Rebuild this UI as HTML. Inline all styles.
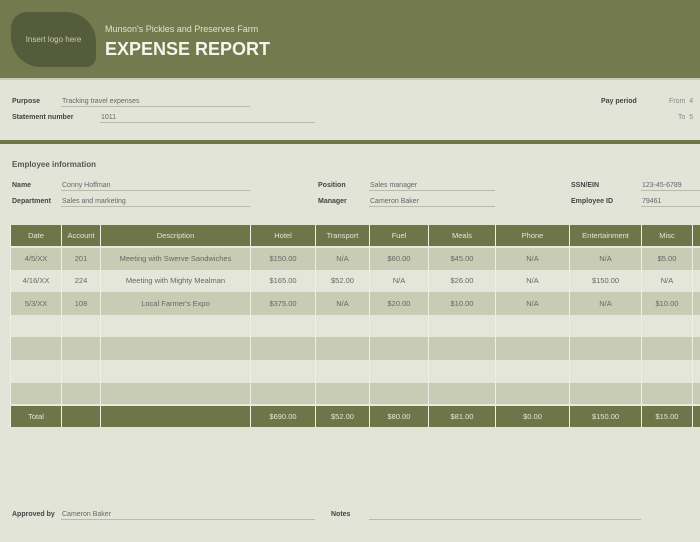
<!DOCTYPE html>
<html><head><meta charset="utf-8"><style>
*{margin:0;padding:0;box-sizing:border-box}
body{width:700px;height:542px;overflow:hidden;background:#e3e4d8;font-family:"Liberation Sans",sans-serif;position:relative;color:#555}
.a{position:absolute;white-space:nowrap}
.hdr{left:0;top:0;width:700px;height:80px;background:#727a4e;border-bottom:2px solid #c9cbb6}
.logo{left:11px;top:12px;width:85px;height:55px;background:#555c3b;border-radius:16px 30px 10px 30px;color:#c9cbb6;font-size:8px;display:flex;align-items:center;justify-content:center}
.lb{font-size:7px;font-weight:bold;color:#444}
.v{font-size:7px;color:#666;border-bottom:1px solid #b9bba8;height:10px;line-height:9px;padding-left:1px}
table{position:absolute;left:10px;top:225px;border-collapse:collapse;table-layout:fixed;width:710px}
td{font-size:7.5px;text-align:center;color:#666;border-left:1px solid #eef0e6;border-right:1px solid #eef0e6;height:22.6px;overflow:hidden;white-space:nowrap}
tr.h td{background:#6e7548;color:#e4e6d6;height:22px;border-bottom:2px solid #e8eadc}
tr.d td{background:#c9ccb4}
tr.l td{background:#e5e6da}
tr.t td{background:#6e7548;color:#e4e6d6;height:22px;border-top:2px solid #e8eadc}
</style></head><body>
<div class="a hdr"></div>
<div class="a logo">Insert logo here</div>
<div class="a" style="left:105px;top:24px;font-size:9px;color:#e0e2d2">Munson's Pickles and Preserves Farm</div>
<div class="a" style="left:105px;top:39px;font-size:18px;font-weight:bold;color:#f4f5ec">EXPENSE REPORT</div>

<div class="a lb" style="left:12px;top:98px">Purpose</div>
<div class="a v" style="left:61px;top:97px;width:189px">Tracking travel expenses</div>
<div class="a lb" style="left:12px;top:114px">Statement number</div>
<div class="a v" style="left:100px;top:113px;width:215px">1011</div>
<div class="a lb" style="left:601px;top:98px">Pay period</div>
<div class="a" style="left:669px;top:98px;font-size:7px;color:#888">From &nbsp;4</div>
<div class="a" style="left:678px;top:114px;font-size:7px;color:#888">To &nbsp;5</div>

<div class="a" style="left:0;top:140px;width:700px;height:4px;background:#6e7548"></div>

<div class="a" style="left:12px;top:160px;font-size:8px;font-weight:bold;color:#555">Employee information</div>
<div class="a lb" style="left:12px;top:182px">Name</div>
<div class="a v" style="left:61px;top:181px;width:189px">Conny Hoffman</div>
<div class="a lb" style="left:12px;top:198px">Department</div>
<div class="a v" style="left:61px;top:197px;width:189px">Sales and marketing</div>
<div class="a lb" style="left:318px;top:182px">Position</div>
<div class="a v" style="left:369px;top:181px;width:126px">Sales manager</div>
<div class="a lb" style="left:318px;top:198px">Manager</div>
<div class="a v" style="left:369px;top:197px;width:126px">Cameron Baker</div>
<div class="a lb" style="left:571px;top:182px">SSN/EIN</div>
<div class="a v" style="left:641px;top:181px;width:60px">123-45-6789</div>
<div class="a lb" style="left:571px;top:198px">Employee ID</div>
<div class="a v" style="left:641px;top:197px;width:60px">79461</div>

<table>
<colgroup><col style="width:51px"><col style="width:39px"><col style="width:150px"><col style="width:65px"><col style="width:54px"><col style="width:59px"><col style="width:67px"><col style="width:74px"><col style="width:72px"><col style="width:51px"><col style="width:28px"></colgroup>
<tr class="h"><td>Date</td><td>Account</td><td>Description</td><td>Hotel</td><td>Transport</td><td>Fuel</td><td>Meals</td><td>Phone</td><td>Entertainment</td><td>Misc</td><td></td></tr>
<tr class="d"><td>4/5/XX</td><td>201</td><td>Meeting with Swerve Sandwiches</td><td>$150.00</td><td>N/A</td><td>$60.00</td><td>$45.00</td><td>N/A</td><td>N/A</td><td>$5.00</td><td></td></tr>
<tr class="l"><td>4/16/XX</td><td>224</td><td>Meeting with Mighty Mealman</td><td>$165.00</td><td>$52.00</td><td>N/A</td><td>$26.00</td><td>N/A</td><td>$150.00</td><td>N/A</td><td></td></tr>
<tr class="d"><td>5/3/XX</td><td>108</td><td>Local Farmer's Expo</td><td>$375.00</td><td>N/A</td><td>$20.00</td><td>$10.00</td><td>N/A</td><td>N/A</td><td>$10.00</td><td></td></tr>
<tr class="l"><td></td><td></td><td></td><td></td><td></td><td></td><td></td><td></td><td></td><td></td><td></td></tr>
<tr class="d"><td></td><td></td><td></td><td></td><td></td><td></td><td></td><td></td><td></td><td></td><td></td></tr>
<tr class="l"><td></td><td></td><td></td><td></td><td></td><td></td><td></td><td></td><td></td><td></td><td></td></tr>
<tr class="d"><td></td><td></td><td></td><td></td><td></td><td></td><td></td><td></td><td></td><td></td><td></td></tr>
<tr class="t"><td>Total</td><td></td><td></td><td>$690.00</td><td>$52.00</td><td>$80.00</td><td>$81.00</td><td>$0.00</td><td>$150.00</td><td>$15.00</td><td></td></tr>
</table>

<div class="a lb" style="left:12px;top:511px">Approved by</div>
<div class="a v" style="left:61px;top:510px;width:254px">Cameron Baker</div>
<div class="a lb" style="left:331px;top:511px">Notes</div>
<div class="a v" style="left:369px;top:510px;width:272px"></div>
</body></html>
